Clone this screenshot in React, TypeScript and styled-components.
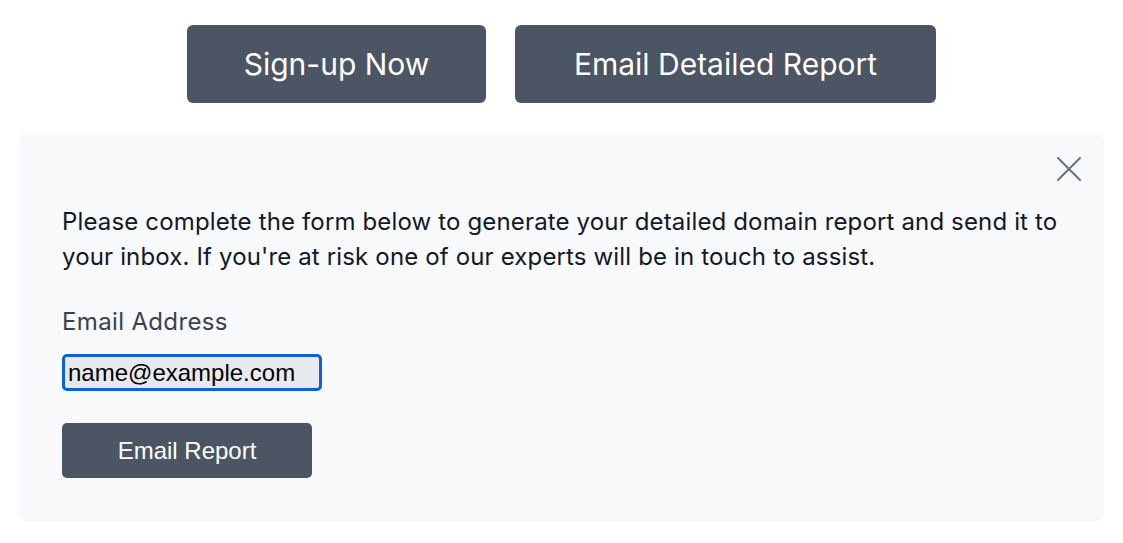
import React from 'react';
import styled, { createGlobalStyle } from 'styled-components';

const GlobalStyle = createGlobalStyle`
  body {
    margin: 0;
    background: #ffffff;
    font-family: Inter, "Noto Sans", sans-serif;
  }
`;

const Page = styled.div`
  padding: 25px 19px 0;
`;

const ActionRow = styled.div`
  display: flex;
  justify-content: center;
  gap: 29px;
`;

const ActionButton = styled.button<{ $width: number }>`
  width: ${(p) => p.$width}px;
  height: 78px;
  border: none;
  border-radius: 6px;
  background: #4b5563;
  color: #ffffff;
  font-family: Inter, sans-serif;
  font-size: 30px;
  cursor: pointer;
`;

const Panel = styled.div`
  position: relative;
  margin-top: 30px;
  height: 388px;
  box-sizing: border-box;
  background: #f8f9fb;
  border-radius: 8px;
  padding: 71px 43px 0;
`;

const CloseButton = styled.button`
  position: absolute;
  top: 19px;
  right: 18px;
  width: 34px;
  height: 34px;
  padding: 0;
  border: none;
  background: transparent;
  display: flex;
  align-items: center;
  justify-content: center;
  cursor: pointer;
`;

const Intro = styled.p`
  margin: 0;
  font-size: 24px;
  line-height: 35px;
  letter-spacing: 0.15px;
  color: #111827;
`;

const Label = styled.label`
  display: block;
  margin-top: 30px;
  font-size: 24px;
  line-height: 35px;
  letter-spacing: 0.35px;
  color: #374151;
`;

const EmailInput = styled.input`
  display: block;
  margin-top: 15px;
  width: 260px;
  height: 37px;
  box-sizing: border-box;
  border: 3px solid #0a63d8;
  border-radius: 5px;
  background: #e8e9ec;
  padding: 0 3px;
  font-family: "Liberation Sans", Arial, sans-serif;
  font-size: 24px;
  color: #000;
  outline: none;
`;

const SubmitButton = styled.button`
  display: block;
  margin-top: 32px;
  width: 250px;
  height: 55px;
  border: none;
  border-radius: 5px;
  background: #4b5563;
  color: #ffffff;
  font-family: "Liberation Sans", Arial, sans-serif;
  font-size: 24px;
  cursor: pointer;
`;

export default function App() {
  return (
    <>
      <GlobalStyle />
      <Page>
        <ActionRow>
          <ActionButton $width={299}>Sign-up Now</ActionButton>
          <ActionButton $width={421}>Email Detailed Report</ActionButton>
        </ActionRow>
        <Panel>
          <CloseButton aria-label="Close">
            <svg width="24" height="24" viewBox="0 0 24 24" fill="none" stroke="#6b7280" strokeWidth="2" strokeLinecap="round">
              <path d="M1 1L23 23M23 1L1 23" />
            </svg>
          </CloseButton>
          <Intro>
            Please complete the form below to generate your detailed domain report and send it to your inbox. If you're at risk one of our experts will be in touch to assist.
          </Intro>
          <Label htmlFor="email">Email Address</Label>
          <EmailInput id="email" type="email" defaultValue="name@example.com" />
          <SubmitButton>Email Report</SubmitButton>
        </Panel>
      </Page>
    </>
  );
}
